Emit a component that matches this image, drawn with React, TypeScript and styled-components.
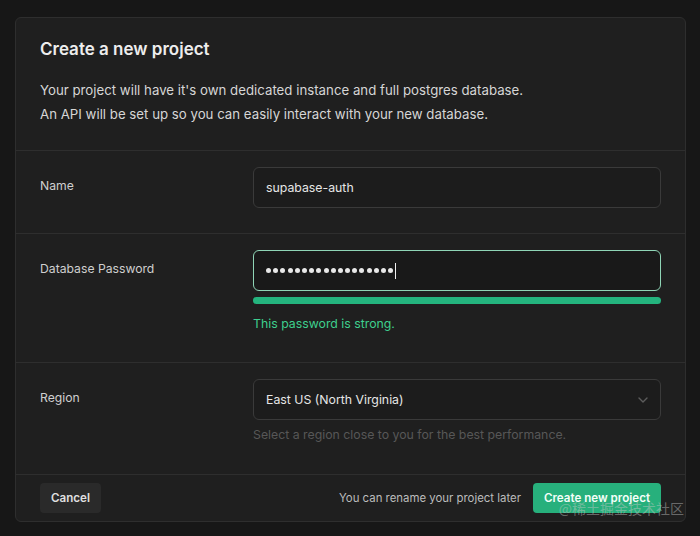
import styled, { createGlobalStyle } from "styled-components";

const GlobalStyle = createGlobalStyle`
  html, body {
    margin: 0;
    padding: 0;
    background-color: #171717;
    font-family: Inter, "Noto Sans", "Liberation Sans", sans-serif;
    -webkit-font-smoothing: antialiased;
  }
`;

const StyledPage = styled.div`
  width: 700px;
  height: 536px;
  box-sizing: border-box;
  padding: 17px 14px 14px 15px;
  position: relative;
`;

const StyledPanel = styled.div`
  background-color: #1f1f1f;
  border: 1px solid #2e2e2e;
  border-radius: 6px;
  display: flex;
  flex-direction: column;
  height: 505px;
  box-sizing: border-box;
`;

const StyledHeader = styled.div`
  padding: 19px 24px 24px;
  border-bottom: 1px solid #2e2e2e;
  display: flex;
  flex-direction: column;
  gap: 17px;
`;

const StyledTitle = styled.h1`
  margin: 0;
  font-size: 17px;
  font-weight: 600;
  color: #ededed;
  line-height: 24px;
`;

const StyledDescription = styled.p`
  margin: 0;
  font-size: 13.25px;
  line-height: 24px;
  color: #d6d6d6;
`;

const StyledRow = styled.div<{ $pt: number; $pb: number }>`
  display: grid;
  grid-template-columns: 213px 1fr;
  padding: ${({ $pt }) => $pt}px 24px ${({ $pb }) => $pb}px;
  border-bottom: 1px solid #2e2e2e;
`;

const StyledLabel = styled.label`
  font-size: 12.2px;
  color: #cfcfcf;
  padding-top: 11px;
  line-height: 16px;
`;

const StyledField = styled.div`
  display: flex;
  flex-direction: column;
`;

const StyledInput = styled.div<{ $focused?: boolean }>`
  height: 41px;
  box-sizing: border-box;
  border: 1px solid ${({ $focused }) => ($focused ? "#8fd5b6" : "#3a3a3a")};
  border-radius: 6px;
  background-color: ${({ $focused }) => ($focused ? "#191919" : "#1c1c1c")};
  display: flex;
  align-items: center;
  padding: 0 12px;
  font-size: 12.3px;
  color: #e6e6e6;
  justify-content: space-between;
`;

const StyledDots = styled.span`
  display: flex;
  align-items: center;
  gap: 2.2px;
`;

const StyledDot = styled.span`
  width: 5px;
  height: 5px;
  border-radius: 50%;
  background-color: #e8e8e8;
`;

const StyledCaret = styled.span`
  width: 1px;
  height: 16px;
  background-color: #f0f0f0;
`;

const StyledStrengthBar = styled.div`
  margin-top: 6px;
  height: 7px;
  border-radius: 4px;
  background-color: #24b47e;
`;

const StyledHint = styled.div<{ $success?: boolean }>`
  margin-top: ${({ $success }) => ($success ? 12 : 7)}px;
  font-size: 12.3px;
  line-height: 16px;
  color: ${({ $success }) => ($success ? "#3ecf8e" : "#575757")};
`;

const StyledFooter = styled.div`
  flex: 1;
  display: flex;
  align-items: center;
  padding: 0 24px;
  gap: 12px;
`;

const StyledButton = styled.button<{ $primary?: boolean }>`
  height: 30px;
  border: none;
  border-radius: 4px;
  padding: 0 11px;
  font-family: inherit;
  font-size: 11.6px;
  font-weight: 600;
  color: ${({ $primary }) => ($primary ? "#f4fff9" : "#e0e0e0")};
  background-color: ${({ $primary }) => ($primary ? "#27b07c" : "#2a2a2a")};
`;

const StyledFooterNote = styled.span`
  margin-left: auto;
  font-size: 11.4px;
  color: #bcbcbc;
`;

const StyledWatermark = styled.div`
  position: absolute;
  right: 16px;
  bottom: 18px;
  font-family: "Noto Sans CJK SC", sans-serif;
  font-size: 14px;
  color: rgba(200, 200, 200, 0.45);
  pointer-events: none;
`;

function Chevron() {
  return (
    <svg width="10" height="6" viewBox="0 0 10 6" fill="none">
      <path d="M1 1l4 4 4-4" stroke="#5c5c5c" strokeWidth="1.4" strokeLinecap="round" strokeLinejoin="round" />
    </svg>
  );
}

export default function App() {
  const dots = Array.from({ length: 18 });

  return (
    <>
      <GlobalStyle />
      <StyledPage>
        <StyledPanel>
          <StyledHeader>
            <StyledTitle>Create a new project</StyledTitle>
            <StyledDescription>
              Your project will have it's own dedicated instance and full postgres database.
              <br />
              An API will be set up so you can easily interact with your new database.
            </StyledDescription>
          </StyledHeader>

          <StyledRow $pt={16} $pb={25}>
            <StyledLabel>Name</StyledLabel>
            <StyledField>
              <StyledInput>supabase-auth</StyledInput>
            </StyledField>
          </StyledRow>

          <StyledRow $pt={16} $pb={30}>
            <StyledLabel>Database Password</StyledLabel>
            <StyledField>
              <StyledInput $focused>
                <StyledDots>
                  {dots.map((_, i) => (
                    <StyledDot key={i} />
                  ))}
                  <StyledCaret />
                </StyledDots>
              </StyledInput>
              <StyledStrengthBar />
              <StyledHint $success>This password is strong.</StyledHint>
            </StyledField>
          </StyledRow>

          <StyledRow $pt={16} $pb={31}>
            <StyledLabel>Region</StyledLabel>
            <StyledField>
              <StyledInput>
                East US (North Virginia)
                <Chevron />
              </StyledInput>
              <StyledHint>Select a region close to you for the best performance.</StyledHint>
            </StyledField>
          </StyledRow>

          <StyledFooter>
            <StyledButton>Cancel</StyledButton>
            <StyledFooterNote>You can rename your project later</StyledFooterNote>
            <StyledButton $primary>Create new project</StyledButton>
          </StyledFooter>
        </StyledPanel>
        <StyledWatermark>@稀土掘金技术社区</StyledWatermark>
      </StyledPage>
    </>
  );
}
